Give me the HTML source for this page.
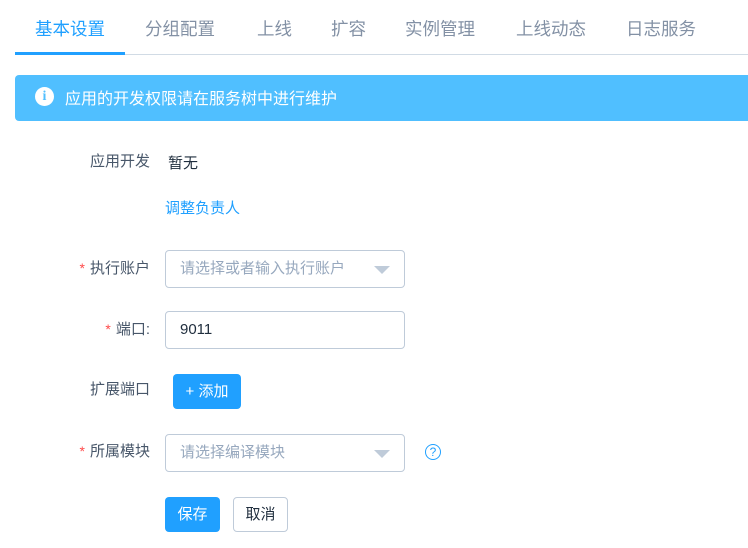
<!DOCTYPE html>
<html><head><meta charset="utf-8"><style>
*{margin:0;padding:0;box-sizing:border-box}
body{width:748px;height:548px;background:#fff;font-family:"Liberation Sans","Noto Sans CJK SC",sans-serif;position:relative;overflow:hidden;color:#48576a}
.a{position:absolute;white-space:nowrap}
.tab{position:absolute;top:18px;font-size:17.5px;color:#8391a5;line-height:22px}
.lbl{position:absolute;right:598px;font-size:15px;color:#48576a;line-height:20px}
.star{color:#ff4949;margin-right:5px;font-size:14px}
.inp{position:absolute;left:165px;width:240px;height:38px;border:1px solid #bfcbd9;border-radius:4px;font-size:15px;line-height:36px;padding-left:14px;color:#97a8be}
.tri{position:absolute;right:14px;top:15px;width:0;height:0;border-left:8px solid transparent;border-right:8px solid transparent;border-top:8px solid #bfcbd9}
</style></head><body>
<div class="tab" style="left:35px;color:#20a0ff">基本设置</div>
<div class="tab" style="left:145px">分组配置</div>
<div class="tab" style="left:257px">上线</div>
<div class="tab" style="left:331px">扩容</div>
<div class="tab" style="left:405px">实例管理</div>
<div class="tab" style="left:516px">上线动态</div>
<div class="tab" style="left:626px">日志服务</div>
<div class="a" style="left:15px;top:54px;width:733px;height:1px;background:#d1dbe5"></div>
<div class="a" style="left:15px;top:52px;width:110px;height:3px;background:#20a0ff"></div>
<div class="a" style="left:15px;top:75px;width:740px;height:46px;background:#50bfff;border-radius:4px"></div>
<div class="a" style="left:35px;top:87px;width:19px;height:19px;border-radius:50%;background:#fff;color:#50bfff;font:bold 14px/19px 'Liberation Serif',serif;text-align:center">i</div>
<div class="a" style="left:65px;top:89px;font-size:16px;color:#fff;line-height:22px">应用的开发权限请在服务树中进行维护</div>
<div class="lbl" style="top:152px">应用开发</div>
<div class="a" style="left:168px;top:154px;font-size:15px;color:#1f2d3d;line-height:20px">暂无</div>
<div class="a" style="left:165px;top:199px;font-size:15px;color:#20a0ff;line-height:20px">调整负责人</div>
<div class="lbl" style="top:258px"><span class="star">*</span>执行账户</div>
<div class="inp" style="top:250px">请选择或者输入执行账户<span class="tri"></span></div>
<div class="lbl" style="top:319px"><span class="star">*</span>端口:</div>
<div class="inp" style="top:311px;color:#1f2d3d">9011</div>
<div class="lbl" style="top:380px">扩展端口</div>
<div class="a" style="left:173px;top:374px;width:68px;height:35px;background:#20a0ff;border-radius:4px;color:#fff;font-size:15px;line-height:35px;text-align:center">+ 添加</div>
<div class="lbl" style="top:441px"><span class="star">*</span>所属模块</div>
<div class="inp" style="top:434px">请选择编译模块<span class="tri"></span></div>
<div class="a" style="left:425px;top:444px;width:16px;height:16px;border:1px solid #20a0ff;border-radius:50%;color:#20a0ff;font-size:12px;line-height:14px;text-align:center">?</div>
<div class="a" style="left:165px;top:497px;width:55px;height:35px;background:#20a0ff;border-radius:4px;color:#fff;font-size:15px;line-height:35px;text-align:center">保存</div>
<div class="a" style="left:233px;top:497px;width:55px;height:35px;border:1px solid #bfcbd9;border-radius:4px;color:#1f2d3d;font-size:15px;line-height:33px;text-align:center">取消</div>
</body></html>
